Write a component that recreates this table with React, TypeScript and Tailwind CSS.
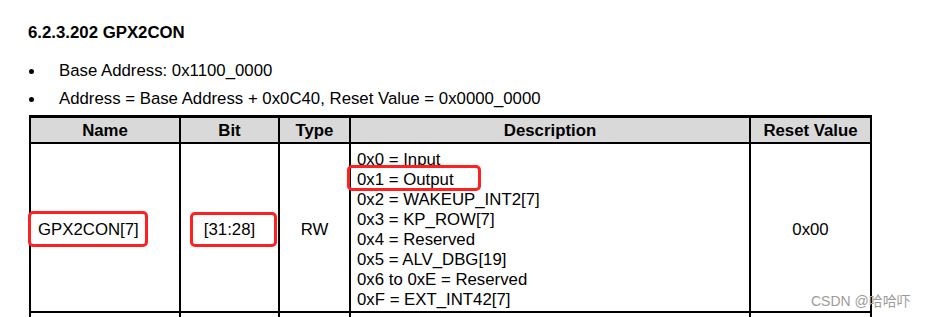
import React from 'react';

const DESC_LINES = [
  '0x0 = Input',
  '0x1 = Output',
  '0x2 = WAKEUP_INT2[7]',
  '0x3 = KP_ROW[7]',
  '0x4 = Reserved',
  '0x5 = ALV_DBG[19]',
  '0x6 to 0xE = Reserved',
  '0xF = EXT_INT42[7]',
];

const COLS = ['w-[150px]', 'w-[99px]', 'w-[71px]', 'w-[400px]', 'w-[121px]'];
const HEADERS = ['Name', 'Bit', 'Type', 'Description', 'Reset Value'];

const Highlight: React.FC<{ className: string }> = ({ className }) => (
  <div className={`absolute border-[3px] border-[#ff2020] rounded-[5px] ${className}`} />
);

const App: React.FC = () => {
  return (
    <div
      className="relative w-[926px] h-[317px] overflow-hidden bg-white text-black"
      style={{ fontFamily: '"Liberation Sans", Arial, sans-serif' }}
    >
      <h3 className="pl-[28px] pt-[23px] text-[16.8px] leading-[20px] font-bold">6.2.3.202 GPX2CON</h3>

      <ul className="mt-[18px] flex flex-col gap-[8px] text-[16.8px] leading-[20px]">
        <li className="flex items-center">
          <span className="ml-[29px] w-[5px] h-[5px] rounded-full bg-black" />
          <span className="ml-[25px]">Base Address: 0x1100_0000</span>
        </li>
        <li className="flex items-center">
          <span className="ml-[29px] w-[5px] h-[5px] rounded-full bg-black" />
          <span className="ml-[25px]">Address = Base Address + 0x0C40, Reset Value = 0x0000_0000</span>
        </li>
      </ul>

      <div className="ml-[29px] mt-[6px] w-[843px] border-t-[3px] border-l-2 border-black text-[16.8px]">
        <div className="flex bg-[#d9d9d9]">
          {HEADERS.map((h, i) => (
            <div
              key={h}
              className={`${COLS[i]} h-[26px] pt-[1px] border-r-2 border-b-2 border-black flex items-center justify-center font-bold leading-[20px]`}
            >
              {h}
            </div>
          ))}
        </div>
        <div className="flex leading-[20px]">
          <div className={`${COLS[0]} h-[169px] pt-[5px] border-r-2 border-b-2 border-black flex items-center pl-[7px]`}>
            GPX2CON[7]
          </div>
          <div className={`${COLS[1]} h-[169px] pt-[5px] border-r-2 border-b-2 border-black flex items-center justify-center`}>
            [31:28]
          </div>
          <div className={`${COLS[2]} h-[169px] pt-[5px] border-r-2 border-b-2 border-black flex items-center justify-center`}>
            RW
          </div>
          <div className={`${COLS[3]} h-[169px] pt-[6px] border-r-2 border-b-2 border-black flex flex-col pl-[6px]`}>
            {DESC_LINES.map((l) => (
              <div key={l}>{l}</div>
            ))}
          </div>
          <div className={`${COLS[4]} h-[169px] pt-[5px] border-r-2 border-b-2 border-black flex items-center justify-center`}>
            0x00
          </div>
        </div>
        <div className="flex">
          {COLS.map((c) => (
            <div key={c} className={`${c} h-[20px] border-r-2 border-black`} />
          ))}
        </div>
      </div>

      <Highlight className="left-[347px] top-[165px] w-[134px] h-[26px]" />
      <Highlight className="left-[28px] top-[211px] w-[120px] h-[36px]" />
      <Highlight className="left-[190px] top-[212px] w-[87px] h-[35px]" />

      <div
        className="absolute left-[811px] top-[293px] text-[14px] leading-[16px] text-[#9c9c9c]"
        style={{ fontFamily: '"Liberation Sans", "Noto Sans CJK SC", sans-serif' }}
      >
        CSDN @哈哈吓
      </div>
    </div>
  );
};

export default App;
